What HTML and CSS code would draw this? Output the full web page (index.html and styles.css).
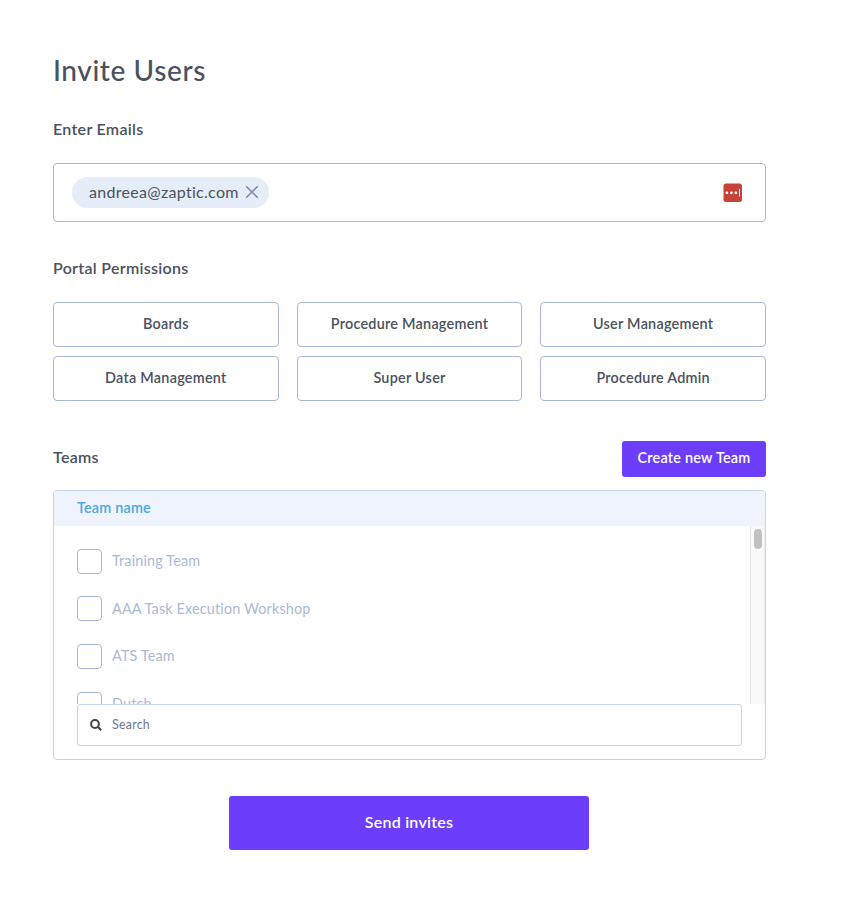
FILE: index.html
```html
<!DOCTYPE html>
<html lang="en">

<head>
  <meta charset="UTF-8" />
  <title>Invite Users</title>
  <link rel="stylesheet" href="styles.css">
</head>

<body>

  <form class="invite-form">
    <h1>Invite Users</h1>

    <h2 class="emails-title">Enter Emails</h2>
    <div class="email-box">
      <span class="chip">
        <span class="chip-text">andreea@zaptic.com</span>
        <svg class="chip-close" width="14" height="14" viewBox="0 0 14 14">
          <path d="M1.2 1.2 L12.8 12.8 M12.8 1.2 L1.2 12.8" />
        </svg>
      </span>
      <svg class="password-icon" width="19" height="19" viewBox="0 0 19 19">
        <rect x="0.5" y="0.5" width="18.5" height="18.5" rx="2.5" fill="#c74336" />
        <circle cx="3.9" cy="9.8" r="1.35" />
        <circle cx="8.4" cy="9.8" r="1.35" />
        <circle cx="12.9" cy="9.8" r="1.35" />
        <rect x="16" y="6" width="1" height="7.5" />
      </svg>
    </div>

    <h2 class="permissions-title">Portal Permissions</h2>
    <div class="permissions">
      <button type="button">Boards</button>
      <button type="button">Procedure Management</button>
      <button type="button">User Management</button>
      <button type="button">Data Management</button>
      <button type="button">Super User</button>
      <button type="button">Procedure Admin</button>
    </div>

    <div class="teams-bar">
      <h2 class="teams-title">Teams</h2>
      <button type="button" class="create-team">Create new Team</button>
    </div>

    <div class="teams-table">
      <div class="table-header">Team name</div>
      <div class="table-body">
        <div class="team-list">
          <div class="team"><span class="checkbox"></span><span class="team-name">Training Team</span></div>
          <div class="team"><span class="checkbox"></span><span class="team-name">AAA Task Execution Workshop</span></div>
          <div class="team"><span class="checkbox"></span><span class="team-name">ATS Team</span></div>
          <div class="team"><span class="checkbox"></span><span class="team-name">Dutch</span></div>
        </div>
        <div class="scrollbar"><div class="thumb"></div></div>
      </div>
      <div class="search">
        <svg width="12" height="12" viewBox="0 0 12 12">
          <circle cx="5" cy="5" r="3.9" />
          <path d="M8 8 L11.2 11.2" />
        </svg>
        <span class="search-text">Search</span>
      </div>
    </div>

    <button type="button" class="send">Send invites</button>
  </form>

</body>

</html>
```
FILE: styles.css
```css
* {
  box-sizing: border-box;
}

body {
  font-family: Lato, sans-serif;
  background: #fff;
  color: #4a5160;
  margin: 0;
}

.invite-form {
  width: 713px;
  margin-left: 53px;
  padding-top: 50px;
  display: flex;
  flex-direction: column;
}

h1,
h2 {
  margin: 0;
  font-weight: 500;
  white-space: nowrap;
}

h1 {
  font-size: 28px;
  line-height: 40px;
  letter-spacing: 0.6px;
}

h2 {
  font-size: 16px;
  font-weight: 600;
  line-height: 24px;
  letter-spacing: 0.3px;
}

button {
  padding: 0 0 2px;
  font-family: inherit;
  font-size: 14.4px;
  font-weight: 600;
  letter-spacing: 0.25px;
  color: inherit;
  cursor: pointer;
}

.emails-title {
  margin-top: 27px;
}

.email-box {
  height: 59px;
  margin-top: 22px;
  padding: 0 23px 0 18px;
  border: 1px solid #adb8d2;
  border-radius: 4px;
  display: flex;
  align-items: center;
  justify-content: space-between;
}

.chip {
  width: 197px;
  height: 31px;
  padding: 0 0 2px 17px;
  border-radius: 16px;
  background: #e5edf8;
  display: flex;
  align-items: center;
}

.chip-text {
  width: 156px;
  padding-bottom: 1px;
  font-size: 16px;
  letter-spacing: 0.3px;
  white-space: nowrap;
}

.chip-close {
  stroke: #7682a0;
  stroke-width: 1.3;
}

.password-icon {
  fill: #fff;
}

.permissions-title {
  margin-top: 34px;
}

.permissions {
  margin-top: 22px;
  display: grid;
  grid-template-columns: repeat(3, 1fr);
  grid-auto-rows: 45px;
  gap: 9px 18px;
}

.permissions button {
  background: #fff;
  border: 1px solid #a9b8da;
  border-radius: 4px;
}

.teams-bar {
  margin-top: 40px;
  height: 36px;
  display: flex;
  align-items: center;
  justify-content: space-between;
}

.teams-title {
  padding-bottom: 4px;
}

.create-team {
  width: 144px;
  height: 36px;
  padding-bottom: 3px;
  color: #fff;
  background: #6c3dfb;
  border: none;
  border-radius: 3px;
}

.teams-table {
  height: 270px;
  margin-top: 13px;
  border: 1px solid #c4d4e9;
  border-radius: 4px;
}

.table-header {
  height: 35px;
  padding-left: 23px;
  border-radius: 3px 3px 0 0;
  background: #eff4fc;
  color: #4aa8df;
  font-size: 14.4px;
  font-weight: 600;
  letter-spacing: 0.2px;
  line-height: 34px;
}

.table-body {
  height: 178px;
  display: flex;
  overflow: hidden;
}

.team-list {
  flex: 1;
  padding: 11.25px 0 0 23px;
}

.team {
  height: 47.7px;
  display: flex;
  align-items: center;
}

.checkbox {
  width: 25px;
  height: 25px;
  margin-right: 10px;
  border: 1px solid #a9b8d8;
  border-radius: 4px;
}

.team-name {
  padding-bottom: 1px;
  color: #aab9d6;
  font-size: 14.4px;
  letter-spacing: 0.15px;
  white-space: nowrap;
}

.scrollbar {
  width: 15px;
  padding: 3px 0 0 3px;
  background: #f9f9f9;
  border-left: 1px solid #e3e3e3;
  border-right: 1px solid #ececec;
}

.thumb {
  width: 8px;
  height: 20px;
  border-radius: 4px;
  background: #c1c1c1;
}

.search {
  width: 665px;
  height: 42px;
  margin-left: 23px;
  padding-left: 12px;
  border: 1px solid #c4d4e9;
  border-radius: 3px;
  display: flex;
  align-items: center;
}

.search svg {
  fill: none;
  stroke: #444;
  stroke-width: 2;
}

.search-text {
  margin-left: 10px;
  padding-bottom: 2px;
  color: #6d7893;
  font-size: 12.5px;
  letter-spacing: 0.2px;
}

.send {
  width: 360px;
  height: 54px;
  margin: 36px 0 0 176px;
  padding-bottom: 3px;
  color: #fff;
  background: #6c3dfb;
  border: none;
  border-radius: 3px;
  font-size: 16px;
}
```
